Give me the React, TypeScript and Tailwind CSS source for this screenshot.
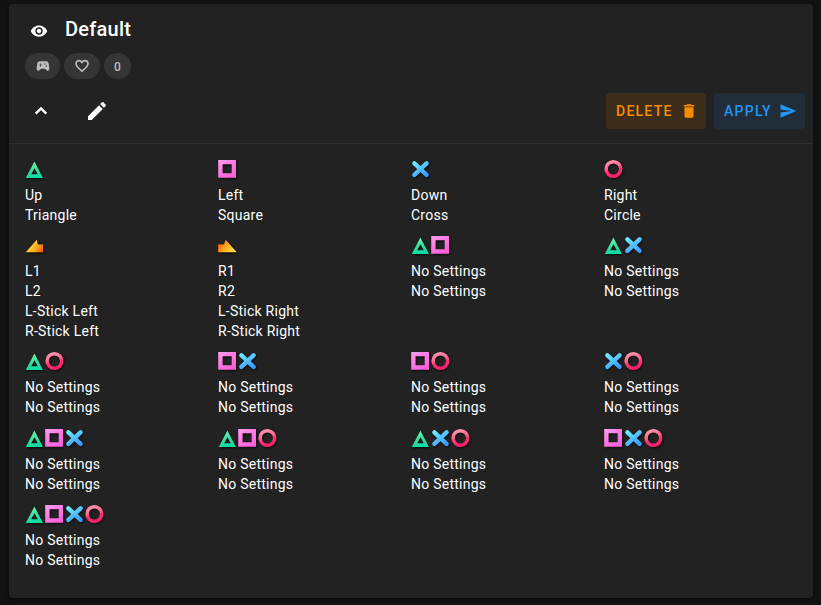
import type { ReactNode } from 'react';
import { MdDelete, MdEdit, MdSend, MdSportsEsports, MdVisibility } from 'react-icons/md';

type Shape = 'triangle' | 'square' | 'cross' | 'circle' | 'slideLeft' | 'slideRight';

interface Binding {
  icons: Shape[];
  keys: string[];
}

const none = ['No Settings', 'No Settings'];

const bindings: Binding[] = [
  { icons: ['triangle'], keys: ['Up', 'Triangle'] },
  { icons: ['square'], keys: ['Left', 'Square'] },
  { icons: ['cross'], keys: ['Down', 'Cross'] },
  { icons: ['circle'], keys: ['Right', 'Circle'] },
  { icons: ['slideLeft'], keys: ['L1', 'L2', 'L-Stick Left', 'R-Stick Left'] },
  { icons: ['slideRight'], keys: ['R1', 'R2', 'L-Stick Right', 'R-Stick Right'] },
  { icons: ['triangle', 'square'], keys: none },
  { icons: ['triangle', 'cross'], keys: none },
  { icons: ['triangle', 'circle'], keys: none },
  { icons: ['square', 'cross'], keys: none },
  { icons: ['square', 'circle'], keys: none },
  { icons: ['cross', 'circle'], keys: none },
  { icons: ['triangle', 'square', 'cross'], keys: none },
  { icons: ['triangle', 'square', 'circle'], keys: none },
  { icons: ['triangle', 'cross', 'circle'], keys: none },
  { icons: ['square', 'cross', 'circle'], keys: none },
  { icons: ['triangle', 'square', 'cross', 'circle'], keys: none },
];

const shapes: Record<Shape, ReactNode> = {
  triangle: (
    <path fillRule="evenodd" fill="url(#green)" d="M9.4 2.4L18 19H0.8L9.4 2.4ZM9.5 9.2L6.2 15.3H12.8L9.5 9.2Z" />
  ),
  square: <path fillRule="evenodd" fill="url(#pink)" d="M0.2 1H18V18.7H0.2V1ZM4.6 5.2V14.3H13.7V5.2H4.6Z" />,
  cross: (
    <path stroke="url(#blue)" strokeWidth="4.4" strokeLinecap="round" fill="none" d="M3.4 4.3L15.6 15.9M15.6 4.3L3.4 15.9" />
  ),
  circle: <circle cx="9.4" cy="10" r="7.3" fill="none" stroke="url(#red)" strokeWidth="3.5" />,
  slideLeft: <path fill="url(#orange)" d="M0.8 17.3L11.8 4.8L12.8 9.4H18.2V17.3Z" />,
  slideRight: <path fill="url(#orangeFlip)" d="M0.2 17.3V9.2L6 9.4L7.6 4.8L18.8 17.3Z" />,
};

// gradients shared by every button icon
function Gradients() {
  return (
    <svg className="absolute size-0" aria-hidden="true">
      <defs>
        <linearGradient id="green" gradientUnits="userSpaceOnUse" x1="5" y1="2" x2="9" y2="18">
          <stop offset="0" stopColor="#7df5b8" />
          <stop offset="0.55" stopColor="#3be0a0" />
          <stop offset="1" stopColor="#0fdca5" />
        </linearGradient>
        <linearGradient id="pink" gradientUnits="userSpaceOnUse" x1="2" y1="1" x2="14" y2="18">
          <stop offset="0" stopColor="#ff9cec" />
          <stop offset="0.45" stopColor="#ff7ce4" />
          <stop offset="1" stopColor="#f95fdb" />
        </linearGradient>
        <linearGradient id="blue" gradientUnits="userSpaceOnUse" x1="3" y1="2" x2="13" y2="18">
          <stop offset="0" stopColor="#74f3ff" />
          <stop offset="0.45" stopColor="#58c8ff" />
          <stop offset="1" stopColor="#3b96f6" />
        </linearGradient>
        <linearGradient id="red" gradientUnits="userSpaceOnUse" x1="5" y1="1" x2="10" y2="18">
          <stop offset="0.1" stopColor="#ff95ad" />
          <stop offset="0.5" stopColor="#ff5f8b" />
          <stop offset="0.65" stopColor="#ff2f73" />
          <stop offset="1" stopColor="#ff1f6e" />
        </linearGradient>
        <linearGradient id="orange" gradientUnits="userSpaceOnUse" x1="4" y1="8" x2="18" y2="17">
          <stop offset="0" stopColor="#ffe648" />
          <stop offset="0.5" stopColor="#ffb01e" />
          <stop offset="1" stopColor="#ff4a08" />
        </linearGradient>
        <linearGradient id="orangeFlip" gradientUnits="userSpaceOnUse" x1="1" y1="8" x2="14" y2="17">
          <stop offset="0" stopColor="#ff5a0a" />
          <stop offset="0.5" stopColor="#ffac22" />
          <stop offset="1" stopColor="#ffd93c" />
        </linearGradient>
      </defs>
    </svg>
  );
}

function ShapeIcon({ name }: { name: Shape }) {
  return (
    <svg viewBox="0 0 20 20" className="size-5 drop-shadow-[1px_1px_1px_rgba(0,0,0,0.7)]">
      {shapes[name]}
    </svg>
  );
}

function Chip({ className, children }: { className: string; children: ReactNode }) {
  return (
    <span className={`flex h-[26px] items-center justify-center rounded-full bg-[#353535] text-xs text-[#bdbdbd] ${className}`}>
      {children}
    </span>
  );
}

export default function App() {
  return (
    <div className="h-[605px] bg-[#121212] pt-1 pr-2 pl-[9px] font-['Roboto','Liberation_Sans',sans-serif] text-white">
      <Gradients />
      <div className="h-[594px] rounded bg-[#222222] shadow-[0_2px_3px_rgba(0,0,0,0.5)]">
        <header className="h-[140px] border-b border-[#303030]">
          <div className="flex h-[49px] items-center pl-[21px]">
            <MdVisibility className="mt-[5px] size-[18px]" />
            <h1 className="ml-[17px] text-xl font-medium tracking-[0.25px]">Default</h1>
          </div>

          <div className="flex gap-1 pl-4">
            <Chip className="w-[35px]">
              <MdSportsEsports className="size-4" />
            </Chip>
            <Chip className="w-9">
              <svg viewBox="0 0 24 24" className="size-4" fill="none" stroke="currentColor" strokeWidth="2.4">
                <path d="M12 19.8C6 14.6 3 11.800 3 8.500C3 6 5 4 7.500 4C9.300 4 11.100 5.200 11.700 6.700H12.300C12.900 5.200 14.700 4 16.500 4C19 4 21 6 21 8.500C21 11.800 18 14.600 12 19.800Z" />
              </svg>
            </Chip>
            <Chip className="w-[27px] pt-0.5 font-medium">0</Chip>
          </div>

          <div className="mt-3.5 flex h-9 items-center pr-2 pl-5">
            <button>
              <svg viewBox="0 0 24 24" className="size-6" fill="none" stroke="currentColor" strokeWidth="2.4">
                <path d="M6.700 14.700L12 9.400L17.300 14.700" />
              </svg>
            </button>
            <button className="ml-8">
              <MdEdit className="size-6" />
            </button>
            <button className="ml-auto flex h-9 w-[100px] items-center rounded bg-[#3d2d1b] pl-2.5 text-sm font-medium tracking-[1.25px] text-[#fb8c00]">
              DELETE
              <MdDelete className="ml-[7px] size-[18px]" />
            </button>
            <button className="ml-2 flex h-9 w-[91px] items-center rounded bg-[#212e39] pl-2.5 text-sm font-medium tracking-[1.25px] text-[#2196f3]">
              APPLY
              <MdSend className="ml-[7px] size-[18px]" />
            </button>
          </div>
        </header>

        <div className="grid grid-cols-4 px-4 pt-[15px] text-sm leading-5 tracking-[0.25px]">
          {bindings.map((binding) => (
            <div key={binding.icons.join('-')} className="pb-[10.2px]">
              <div className="flex h-[26px]">
                {binding.icons.map((icon) => (
                  <ShapeIcon key={icon} name={icon} />
                ))}
              </div>
              {binding.keys.map((label, i) => (
                <p key={i}>{label}</p>
              ))}
            </div>
          ))}
        </div>
      </div>
    </div>
  );
}
